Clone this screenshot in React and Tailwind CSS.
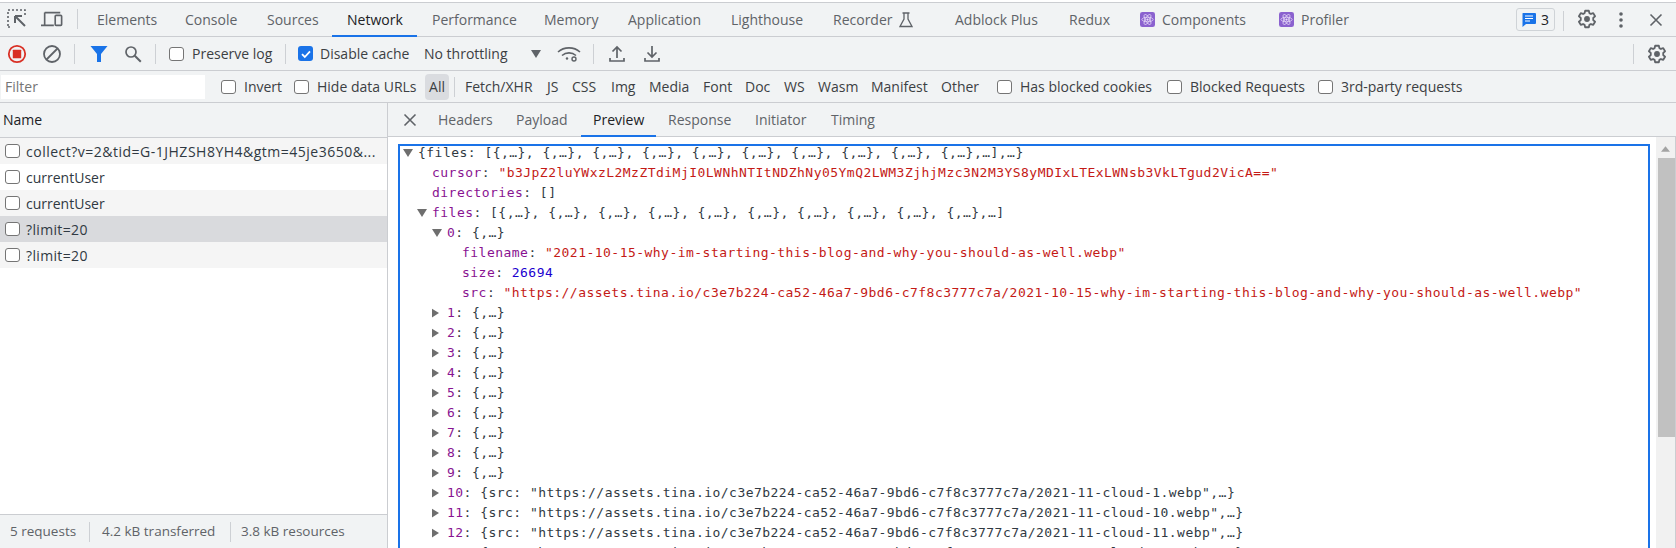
import React from 'react';

const UI_FONT = { fontFamily: '"Open Sans", sans-serif' };

const MAIN_TABS = [
  { label: 'Elements', cls: 'w-[88px]' },
  { label: 'Console', cls: 'w-[82px]' },
  { label: 'Sources', cls: 'w-[65px]' },
  { label: 'Network', cls: 'w-[85px] mr-[15px]', active: true },
  { label: 'Performance', cls: 'w-[112px]' },
  { label: 'Memory', cls: 'w-[84px]' },
  { label: 'Application', cls: 'w-[103px]' },
  { label: 'Lighthouse', cls: 'w-[102px]' },
];

const TYPES = [
  { label: 'Fetch/XHR', cls: 'w-[82px]' },
  { label: 'JS', cls: 'w-[25px]' },
  { label: 'CSS', cls: 'w-[39px]' },
  { label: 'Img', cls: 'w-[38px]' },
  { label: 'Media', cls: 'w-[54px]' },
  { label: 'Font', cls: 'w-[42px]' },
  { label: 'Doc', cls: 'w-[39px]' },
  { label: 'WS', cls: 'w-[34px]' },
  { label: 'Wasm', cls: 'w-[53px]' },
  { label: 'Manifest', cls: 'w-[70px]' },
  { label: 'Other', cls: 'w-[56px]' },
];

const SUB_TABS = [
  { label: 'Headers', cls: 'w-[78px]' },
  { label: 'Payload', cls: 'w-[65px]' },
  { label: 'Preview', cls: 'w-[75px] mr-[12px] pl-[12px]', active: true },
  { label: 'Response', cls: 'w-[87px]' },
  { label: 'Initiator', cls: 'w-[76px]' },
  { label: 'Timing', cls: 'w-[70px]' },
];

const REQUESTS = [
  { name: 'collect?v=2&tid=G-1JHZSH8YH4&gtm=45je3650&...', cls: 'bg-[#f5f5f5] tracking-[0.5px]' },
  { name: 'currentUser', cls: 'bg-white' },
  { name: 'currentUser', cls: 'bg-[#f5f5f5]' },
  { name: '?limit=20', cls: 'bg-[#d9dadd] tracking-[0.35px]' },
  { name: '?limit=20', cls: 'bg-[#f5f5f5] tracking-[0.35px]' },
];

const ASSET_BASE = 'https://assets.tina.io/c3e7b224-ca52-46a7-9bd6-c7f8c3777c7a/';
const OBJ_LIST = '[{,…}, {,…}, {,…}, {,…}, {,…}, {,…}, {,…}, {,…}, {,…}, {,…},…]';

function Check({ cls = '' }) {
  return <span className={`inline-block w-[15px] h-[14px] shrink-0 rounded-[3px] border border-[#757575] bg-white ${cls}`} />;
}

function CheckLabel({ label, cls }) {
  return (
    <div className={`flex items-center shrink-0 ${cls}`}>
      <Check />
      <span className="ml-[8px] whitespace-nowrap">{label}</span>
    </div>
  );
}

function Sep({ cls = '' }) {
  return <span className={`block w-px h-[20px] bg-[#cdd0d4] shrink-0 ${cls}`} />;
}

function Gear({ cls = '' }) {
  return (
    <svg viewBox="0 0 24 24" className={`shrink-0 ${cls}`} fill="none">
      <path d="M10 3h4l.6 2.6 1.7.9 2.5-.9 2 3.4-2 1.8v2.4l2 1.8-2 3.4-2.5-.9-1.7.9L14 21h-4l-.6-2.6-1.7-.9-2.5.9-2-3.4 2-1.8v-2.4l-2-1.8 2-3.4 2.5.9 1.7-.9z" stroke="#5f6368" strokeWidth="2" strokeLinejoin="round" />
      <circle cx="12" cy="12" r="3.2" fill="#5f6368" />
    </svg>
  );
}

function ReactBadge({ cls = '' }) {
  return (
    <svg viewBox="0 0 16 16" className={`w-[15px] h-[15px] shrink-0 ${cls}`}>
      <rect width="16" height="16" rx="2.5" fill="#8b62cf" />
      <g fill="none" stroke="#e9def8" strokeWidth="0.8">
        <ellipse cx="8" cy="8" rx="6" ry="2.4" />
        <ellipse cx="8" cy="8" rx="6" ry="2.4" transform="rotate(60 8 8)" />
        <ellipse cx="8" cy="8" rx="6" ry="2.4" transform="rotate(120 8 8)" />
      </g>
      <circle cx="8" cy="8" r="1.2" fill="#e9def8" />
    </svg>
  );
}

function CloseIcon({ cls = '' }) {
  return (
    <svg viewBox="0 0 14 14" className={`w-[14px] h-[14px] shrink-0 ${cls}`}>
      <path d="M1.5 1.5l11 11M12.5 1.5l-11 11" stroke="#5f6368" strokeWidth="1.6" />
    </svg>
  );
}

function TreeArrow({ open }) {
  return (
    <span className="w-[15px] shrink-0 flex items-center">
      {open ? (
        <svg viewBox="0 0 10 8" className="w-[10px] h-[8px]"><path d="M0 0h10L5 8z" fill="#6e6e6e" /></svg>
      ) : (
        <svg viewBox="0 0 8 10" className="w-[7px] h-[10px]"><path d="M0 0l8 5-8 5z" fill="#6e6e6e" /></svg>
      )}
    </span>
  );
}

function Key({ children }) {
  return <span className="text-[#881391]">{children}</span>;
}

function Str({ children }) {
  return <span className="text-[#c41a16]">{children}</span>;
}

function Row({ indent, arrow, children }) {
  return (
    <div className={`h-[20px] flex items-center whitespace-nowrap ${indent}`}>
      {arrow === 'open' && <TreeArrow open />}
      {arrow === 'closed' && <TreeArrow />}
      <span>{children}</span>
    </div>
  );
}

function ToolbarIcons() {
  return (
    <>
      <svg viewBox="0 0 20 20" className="w-[20px] h-[20px] ml-[7px] shrink-0">
        <circle cx="10" cy="10" r="8.2" fill="none" stroke="#d93025" strokeWidth="1.8" />
        <rect x="5.8" y="5.8" width="8.4" height="8.4" rx="0.5" fill="#d93025" />
      </svg>
      <svg viewBox="0 0 20 20" className="w-[20px] h-[20px] ml-[15px] shrink-0">
        <circle cx="10" cy="10" r="8" fill="none" stroke="#5f6368" strokeWidth="1.8" />
        <path d="M4.5 15.5l11-11" stroke="#5f6368" strokeWidth="1.8" />
      </svg>
      <Sep cls="ml-[12px]" />
      <svg viewBox="0 0 18 18" className="w-[18px] h-[18px] ml-[15px] shrink-0">
        <path d="M0.5 1h17l-6.5 8v8h-4V9z" fill="#1a73e8" />
      </svg>
      <svg viewBox="0 0 18 18" className="w-[18px] h-[18px] ml-[16px] shrink-0">
        <circle cx="7" cy="7" r="5" fill="none" stroke="#5f6368" strokeWidth="1.7" />
        <path d="M10.8 10.8l6 6" stroke="#5f6368" strokeWidth="2" />
      </svg>
      <Sep cls="ml-[13px]" />
    </>
  );
}

export default function App() {
  return (
    <div className="w-[1676px] h-[548px] overflow-hidden bg-white flex flex-col text-[14px] text-[#3c4043]" style={UI_FONT}>
      <div className="h-[2px] bg-white" />

      {/* main tab strip */}
      <div className="h-[35px] shrink-0 flex bg-[#f1f3f4] border-t border-b border-[#cbcdd1]">
        <svg viewBox="0 0 20 20" className="w-[20px] h-[20px] ml-[7px] mt-[6px] shrink-0">
          <path d="M1 17V1h17v5" stroke="#5f6368" strokeWidth="1.6" strokeDasharray="2 2" fill="none" />
          <path d="M1 18h4" stroke="#5f6368" strokeWidth="1.6" strokeDasharray="2 2" fill="none" />
          <path d="M8 7h7M8 7v7M8 7l10 10" stroke="#5f6368" strokeWidth="2" fill="none" />
        </svg>
        <svg viewBox="0 0 24 20" className="w-[22px] h-[20px] ml-[14px] mt-[6px] shrink-0">
          <path d="M4 3h17M4 3v13M0 17h14" stroke="#5f6368" strokeWidth="1.8" fill="none" />
          <rect x="15.5" y="6" width="7" height="11" rx="1" stroke="#5f6368" strokeWidth="1.8" fill="none" />
        </svg>
        <Sep cls="ml-[14px] mt-[6px]" />
        <div className="w-[19px] shrink-0" />
        {MAIN_TABS.map(tab => (
          <div key={tab.label} className={`${tab.cls} shrink-0 flex items-center whitespace-nowrap ${tab.active ? 'text-[#202124] border-b-2 border-[#1a73e8] -mb-px' : 'text-[#5f6368]'}`}>
            <span className={tab.active ? 'pl-[15px]' : ''}>{tab.label}</span>
          </div>
        ))}
        <div className="w-[122px] shrink-0 flex items-center text-[#5f6368] gap-[6px]">
          Recorder
          <svg viewBox="0 0 14 16" className="w-[14px] h-[16px]">
            <path d="M3.5 1h7M5 1v6L1 14.5h12L9 7V1" stroke="#5f6368" strokeWidth="1.3" fill="none" />
          </svg>
        </div>
        <div className="w-[114px] shrink-0 flex items-center text-[#5f6368]">Adblock Plus</div>
        <div className="w-[71px] shrink-0 flex items-center text-[#5f6368]">Redux</div>
        <div className="w-[139px] shrink-0 flex items-center text-[#5f6368] gap-[7px]"><ReactBadge />Components</div>
        <div className="w-[237px] shrink-0 flex items-center text-[#5f6368] gap-[7px]"><ReactBadge />Profiler</div>
        <div className="flex items-center h-[23px] w-[39px] mt-[5px] shrink-0 justify-center gap-[5px] rounded-[3px] border border-[#cfd3d7] text-[#202124]">
          <svg viewBox="0 0 14 14" className="w-[14px] h-[14px]">
            <path d="M1 0h12a1 1 0 011 1v9a1 1 0 01-1 1H4l-3.5 3V1a1 1 0 01.5-1z" fill="#1a73e8" />
            <path d="M3 3h8M3 5.5h8M3 8h5" stroke="#fff" strokeWidth="1" />
          </svg>
          3
        </div>
        <Sep cls="ml-[8px] mt-[8px]" />
        <Gear cls="w-[22px] h-[22px] ml-[12px] mt-[5px]" />
        <svg viewBox="0 0 4 16" className="w-[4px] h-[16px] ml-[21px] mt-[9px] shrink-0">
          <circle cx="2" cy="2" r="1.8" fill="#5f6368" /><circle cx="2" cy="8" r="1.8" fill="#5f6368" /><circle cx="2" cy="14" r="1.8" fill="#5f6368" />
        </svg>
        <CloseIcon cls="ml-[26px] mt-[10px]" />
      </div>

      {/* network toolbar */}
      <div className="h-[34px] shrink-0 flex items-center bg-[#f1f3f4] border-b border-[#cbcdd1]">
        <ToolbarIcons />
        <CheckLabel label="Preserve log" cls="ml-[13px] w-[116px]" />
        <Sep />
        <span className="ml-[12px] w-[15px] h-[15px] shrink-0 rounded-[3px] bg-[#1a73e8] flex items-center justify-center">
          <svg viewBox="0 0 12 12" className="w-[12px] h-[12px]"><path d="M2 6.2l2.8 2.8L10 3.4" stroke="#fff" strokeWidth="1.8" fill="none" /></svg>
        </span>
        <span className="ml-[7px] w-[104px] shrink-0 whitespace-nowrap">Disable cache</span>
        <span className="w-[107px] shrink-0 whitespace-nowrap">No throttling</span>
        <svg viewBox="0 0 10 8" className="w-[10px] h-[8px] shrink-0"><path d="M0 0h10L5 8z" fill="#5f6368" /></svg>
        <svg viewBox="0 0 24 16" className="w-[24px] h-[16px] ml-[16px] shrink-0">
          <path d="M1 6c6-5.500 16-5.500 22 0M5 9.500c4-3.500 10-3.500 14 0" stroke="#5f6368" strokeWidth="1.6" fill="none" />
          <circle cx="17" cy="13" r="2" fill="none" stroke="#5f6368" strokeWidth="1.4" />
          <circle cx="10" cy="12.500" r="1.200" fill="#5f6368" />
        </svg>
        <Sep cls="ml-[12px]" />
        <svg viewBox="0 0 16 18" className="w-[16px] h-[18px] ml-[15px] shrink-0">
          <path d="M8 13V2M3.500 6.500L8 2l4.500 4.500M1 13v3h14v-3" stroke="#5f6368" strokeWidth="1.700" fill="none" />
        </svg>
        <svg viewBox="0 0 16 18" className="w-[16px] h-[18px] ml-[19px] shrink-0">
          <path d="M8 1v11M3.500 7.500L8 12l4.500-4.500M1 13v3h14v-3" stroke="#5f6368" strokeWidth="1.700" fill="none" />
        </svg>
        <div className="flex-1" />
        <Sep />
        <Gear cls="w-[22px] h-[22px] ml-[12px] mr-[8px]" />
      </div>

      {/* filter bar */}
      <div className="h-[32px] shrink-0 flex items-center bg-[#f1f3f4] border-b border-[#cbcdd1]">
        <div className="w-[204px] h-[24px] ml-px shrink-0 bg-white flex items-center pl-[4px] text-[#757575]">Filter</div>
        <CheckLabel label="Invert" cls="ml-[16px] w-[73px]" />
        <CheckLabel label="Hide data URLs" cls="w-[131px]" />
        <span className="w-[24px] h-[26px] shrink-0 rounded-[4px] bg-[#dadce0] flex items-center justify-center">All</span>
        <Sep cls="ml-[5px] mr-[10px]" />
        {TYPES.map(t => (
          <span key={t.label} className={`${t.cls} shrink-0 whitespace-nowrap`}>{t.label}</span>
        ))}
        <CheckLabel label="Has blocked cookies" cls="w-[170px]" />
        <CheckLabel label="Blocked Requests" cls="w-[151px]" />
        <CheckLabel label="3rd-party requests" cls="" />
      </div>

      <div className="flex-1 min-h-0 flex">
        {/* request list */}
        <div className="w-[388px] shrink-0 flex flex-col border-r border-[#cbcdd1]">
          <div className="h-[35px] shrink-0 flex items-center pl-[3px] pb-px bg-[#f1f3f4] border-b border-[#cbcdd1] text-[#202124]">Name</div>
          <div className="flex-1 min-h-0">
            {REQUESTS.map((req, i) => (
              <div key={i} className={`h-[26px] flex items-center pl-[5px] whitespace-nowrap text-[#303942] ${req.cls}`}>
                <Check cls="bg-transparent" />
                <span className="ml-[6px]">{req.name}</span>
              </div>
            ))}
          </div>
          <div className="h-[34px] shrink-0 flex items-center pl-[10px] bg-[#f1f3f4] border-t border-[#cbcdd1] text-[#5f6368] text-[13.5px]">
            <span className="w-[79px]">5 requests</span>
            <Sep />
            <span className="w-[140px] pl-[12px] whitespace-nowrap">4.2 kB transferred</span>
            <Sep />
            <span className="pl-[10px] whitespace-nowrap">3.8 kB resources</span>
          </div>
        </div>

        {/* preview pane */}
        <div className="flex-1 min-w-0 flex flex-col">
          <div className="h-[34px] shrink-0 flex bg-[#f1f3f4] border-b border-[#cbcdd1]">
            <CloseIcon cls="ml-[15px] mt-[10px]" />
            <div className="w-[21px] shrink-0" />
            {SUB_TABS.map(tab => (
              <div key={tab.label} className={`${tab.cls} shrink-0 flex items-center whitespace-nowrap ${tab.active ? 'text-[#202124] border-b-2 border-[#1a73e8] -mb-px' : 'text-[#5f6368]'}`}>
                {tab.label}
              </div>
            ))}
          </div>
          <div className="flex-1 min-h-0 flex">
            <div className="w-[1268px] shrink-0 pl-[10px] pr-[6px] pt-[7px] overflow-hidden">
              <div className="h-[420px] border-t-2 border-x-2 border-[#1a73e8] overflow-hidden text-[13px] tracking-[0.47px] text-[#303942]" style={{ fontFamily: '"DejaVu Sans Mono", monospace' }}>
                <div className="-mt-[3px] pl-[3px]">
                  <Row indent="" arrow="open">{'{'}files: {OBJ_LIST},…{'}'}</Row>
                  <Row indent="pl-[29px]"><Key>cursor</Key>: <Str>"b3JpZ2luYWxzL2MzZTdiMjI0LWNhNTItNDZhNy05YmQ2LWM3ZjhjMzc3N2M3YS8yMDIxLTExLWNsb3VkLTgud2VicA=="</Str></Row>
                  <Row indent="pl-[29px]"><Key>directories</Key>: []</Row>
                  <Row indent="pl-[14px]" arrow="open"><Key>files</Key>: {OBJ_LIST}</Row>
                  <Row indent="pl-[29px]" arrow="open"><Key>0</Key>: {'{,…}'}</Row>
                  <Row indent="pl-[59px]"><Key>filename</Key>: <Str>"2021-10-15-why-im-starting-this-blog-and-why-you-should-as-well.webp"</Str></Row>
                  <Row indent="pl-[59px]"><Key>size</Key>: <span className="text-[#1c00cf]">26694</span></Row>
                  <Row indent="pl-[59px]"><Key>src</Key>: <Str>"{ASSET_BASE}2021-10-15-why-im-starting-this-blog-and-why-you-should-as-well.webp"</Str></Row>
                  {[1, 2, 3, 4, 5, 6, 7, 8, 9].map(n => (
                    <Row key={n} indent="pl-[29px]" arrow="closed"><Key>{n}</Key>: {'{,…}'}</Row>
                  ))}
                  {[['10', '1'], ['11', '10'], ['12', '11'], ['13', '12']].map(([n, f]) => (
                    <Row key={n} indent="pl-[29px]" arrow="closed"><Key>{n}</Key>: {'{'}src: "{ASSET_BASE}2021-11-cloud-{f}.webp",…{'}'}</Row>
                  ))}
                </div>
              </div>
            </div>
            <div className="w-[20px] shrink-0 bg-[#f1f1f1] flex flex-col items-center border-r border-[#cbcdd1]">
              <svg viewBox="0 0 10 6" className="w-[9px] h-[6px] mt-[9px] shrink-0"><path d="M5 0l5 6H0z" fill="#a3a3a3" /></svg>
              <div className="w-[17px] h-[279px] mt-[6px] ml-[2px] bg-[#c1c1c1] shrink-0" />
            </div>
          </div>
        </div>
      </div>
    </div>
  );
}
